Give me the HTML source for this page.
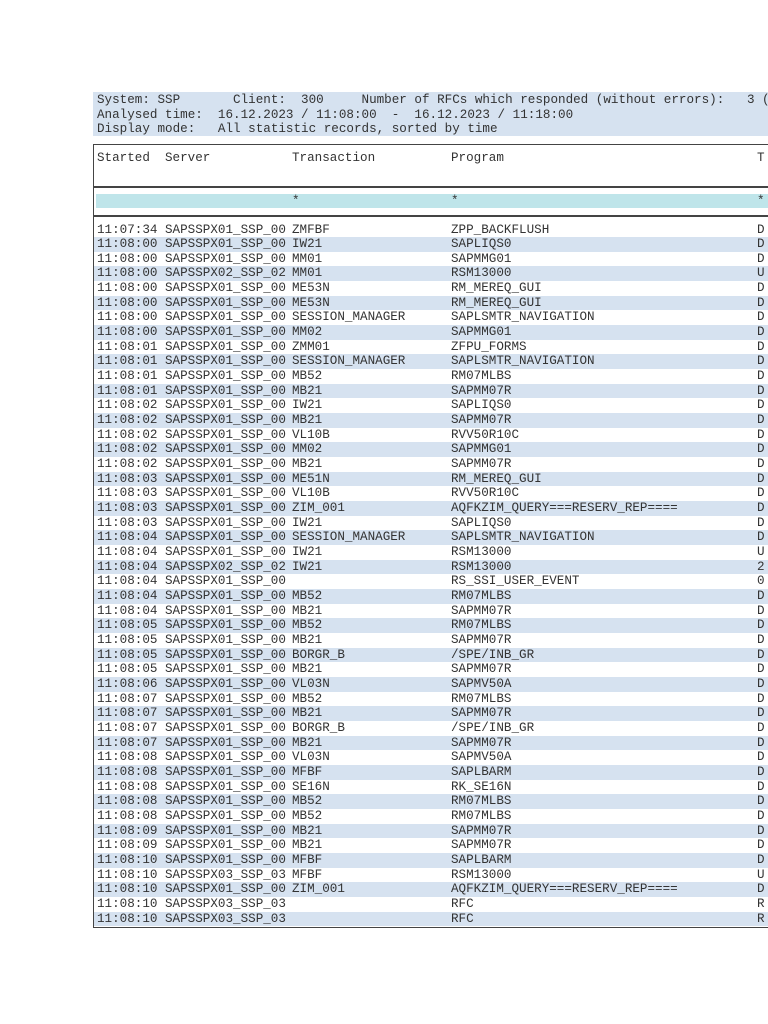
<!DOCTYPE html>
<html><head><meta charset="utf-8"><style>
body{margin:0;background:#fff;width:768px;height:1024px;overflow:hidden;position:relative;font-family:"Liberation Mono",monospace;font-size:12.6px;color:#333;}
.hdr{position:absolute;left:93px;top:92px;width:675px;height:44px;background:#d6e2f0;}
.hdr div{position:absolute;left:4px;white-space:pre;line-height:14.6px;}
.box{position:absolute;left:93px;top:144px;width:680px;height:782px;border-left:1px solid #444;border-top:1px solid #444;border-bottom:1px solid #444;}
.ln{position:absolute;left:94px;width:680px;height:1.5px;background:#444;}
.cy{position:absolute;left:96px;top:194px;width:680px;height:14px;background:#bfe5ea;}
.r{position:absolute;left:94px;width:680px;height:14.66px;line-height:14.66px;white-space:pre;}
.r.a{background:#d6e2f0;}
.r span{position:absolute;top:0;}
.c1{left:3px}.c2{left:71px}.c3{left:198px}.c4{left:357px}.c5{left:663px}
</style></head><body>
<div class="hdr">
<div style="top:1px">System: SSP       Client:  300     Number of RFCs which responded (without errors):   3 (</div>
<div style="top:15.6px">Analysed time:  16.12.2023 / 11:08:00  -  16.12.2023 / 11:18:00</div>
<div style="top:30.2px">Display mode:   All statistic records, sorted by time</div>
</div>
<div class="box"></div>
<div class="r" style="top:151px"><span class="c1">Started</span><span class="c2">Server</span><span class="c3">Transaction</span><span class="c4">Program</span><span class="c5">T</span></div>
<div class="ln" style="top:186px"></div>
<div class="cy"></div>
<div class="r" style="top:194px"><span class="c3">*</span><span class="c4">*</span><span class="c5">*</span></div>
<div class="ln" style="top:215px"></div>
<div id="rows"></div>
<script>
var d=[
["11:07:34","SAPSSPX01_SSP_00","ZMFBF","ZPP_BACKFLUSH","D"],
["11:08:00","SAPSSPX01_SSP_00","IW21","SAPLIQS0","D"],
["11:08:00","SAPSSPX01_SSP_00","MM01","SAPMMG01","D"],
["11:08:00","SAPSSPX02_SSP_02","MM01","RSM13000","U"],
["11:08:00","SAPSSPX01_SSP_00","ME53N","RM_MEREQ_GUI","D"],
["11:08:00","SAPSSPX01_SSP_00","ME53N","RM_MEREQ_GUI","D"],
["11:08:00","SAPSSPX01_SSP_00","SESSION_MANAGER","SAPLSMTR_NAVIGATION","D"],
["11:08:00","SAPSSPX01_SSP_00","MM02","SAPMMG01","D"],
["11:08:01","SAPSSPX01_SSP_00","ZMM01","ZFPU_FORMS","D"],
["11:08:01","SAPSSPX01_SSP_00","SESSION_MANAGER","SAPLSMTR_NAVIGATION","D"],
["11:08:01","SAPSSPX01_SSP_00","MB52","RM07MLBS","D"],
["11:08:01","SAPSSPX01_SSP_00","MB21","SAPMM07R","D"],
["11:08:02","SAPSSPX01_SSP_00","IW21","SAPLIQS0","D"],
["11:08:02","SAPSSPX01_SSP_00","MB21","SAPMM07R","D"],
["11:08:02","SAPSSPX01_SSP_00","VL10B","RVV50R10C","D"],
["11:08:02","SAPSSPX01_SSP_00","MM02","SAPMMG01","D"],
["11:08:02","SAPSSPX01_SSP_00","MB21","SAPMM07R","D"],
["11:08:03","SAPSSPX01_SSP_00","ME51N","RM_MEREQ_GUI","D"],
["11:08:03","SAPSSPX01_SSP_00","VL10B","RVV50R10C","D"],
["11:08:03","SAPSSPX01_SSP_00","ZIM_001","AQFKZIM_QUERY===RESERV_REP====","D"],
["11:08:03","SAPSSPX01_SSP_00","IW21","SAPLIQS0","D"],
["11:08:04","SAPSSPX01_SSP_00","SESSION_MANAGER","SAPLSMTR_NAVIGATION","D"],
["11:08:04","SAPSSPX01_SSP_00","IW21","RSM13000","U"],
["11:08:04","SAPSSPX02_SSP_02","IW21","RSM13000","2"],
["11:08:04","SAPSSPX01_SSP_00","","RS_SSI_USER_EVENT","0"],
["11:08:04","SAPSSPX01_SSP_00","MB52","RM07MLBS","D"],
["11:08:04","SAPSSPX01_SSP_00","MB21","SAPMM07R","D"],
["11:08:05","SAPSSPX01_SSP_00","MB52","RM07MLBS","D"],
["11:08:05","SAPSSPX01_SSP_00","MB21","SAPMM07R","D"],
["11:08:05","SAPSSPX01_SSP_00","BORGR_B","/SPE/INB_GR","D"],
["11:08:05","SAPSSPX01_SSP_00","MB21","SAPMM07R","D"],
["11:08:06","SAPSSPX01_SSP_00","VL03N","SAPMV50A","D"],
["11:08:07","SAPSSPX01_SSP_00","MB52","RM07MLBS","D"],
["11:08:07","SAPSSPX01_SSP_00","MB21","SAPMM07R","D"],
["11:08:07","SAPSSPX01_SSP_00","BORGR_B","/SPE/INB_GR","D"],
["11:08:07","SAPSSPX01_SSP_00","MB21","SAPMM07R","D"],
["11:08:08","SAPSSPX01_SSP_00","VL03N","SAPMV50A","D"],
["11:08:08","SAPSSPX01_SSP_00","MFBF","SAPLBARM","D"],
["11:08:08","SAPSSPX01_SSP_00","SE16N","RK_SE16N","D"],
["11:08:08","SAPSSPX01_SSP_00","MB52","RM07MLBS","D"],
["11:08:08","SAPSSPX01_SSP_00","MB52","RM07MLBS","D"],
["11:08:09","SAPSSPX01_SSP_00","MB21","SAPMM07R","D"],
["11:08:09","SAPSSPX01_SSP_00","MB21","SAPMM07R","D"],
["11:08:10","SAPSSPX01_SSP_00","MFBF","SAPLBARM","D"],
["11:08:10","SAPSSPX03_SSP_03","MFBF","RSM13000","U"],
["11:08:10","SAPSSPX01_SSP_00","ZIM_001","AQFKZIM_QUERY===RESERV_REP====","D"],
["11:08:10","SAPSSPX03_SSP_03","","RFC","R"],
["11:08:10","SAPSSPX03_SSP_03","","RFC","R"]];
var h="";
for(var i=0;i<d.length;i++){var r=d[i];
h+='<div class="r'+(i%2?' a':'')+'" style="top:'+(222.5+i*14.66).toFixed(2)+'px"><span class="c1">'+r[0]+'</span><span class="c2">'+r[1]+'</span><span class="c3">'+r[2]+'</span><span class="c4">'+r[3]+'</span><span class="c5">'+r[4]+'</span></div>';}
document.getElementById("rows").innerHTML=h;
</script>
</body></html>
